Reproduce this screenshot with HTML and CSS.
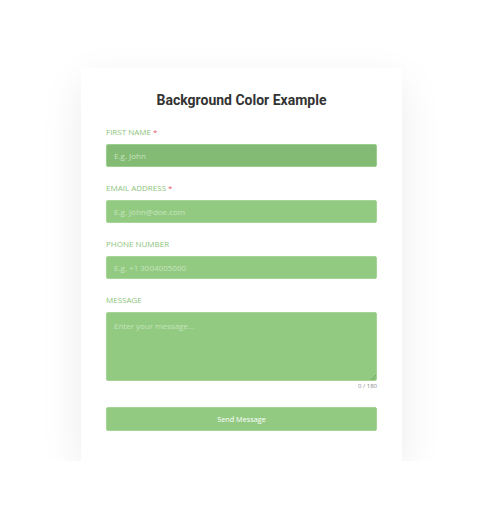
FILE: index.html
```
<!DOCTYPE html>
<html>
<head>
<meta charset="utf-8">
<link rel="stylesheet" href="styles.css">
</head>
<body>
<div class="card">
  <h1 class="title">Background Color Example</h1>
  <div class="field">
    <label class="label">First Name <span class="req">*</span></label>
    <input class="input input-active" type="text" placeholder="E.g. John">
  </div>
  <div class="field">
    <label class="label">Email Address <span class="req">*</span></label>
    <input class="input" type="text" placeholder="E.g. john@doe.com">
  </div>
  <div class="field">
    <label class="label">Phone Number</label>
    <input class="input" type="text" placeholder="E.g. +1 3004005000">
  </div>
  <div class="field field-msg">
    <label class="label">Message</label>
    <div class="ta-wrap">
      <textarea class="input textarea" placeholder="Enter your message..."></textarea>
      <svg class="grip" width="6" height="6" viewBox="0 0 6 6"><path d="M6 1 L1 6 M6 3.5 L3.5 6" stroke="#6e9e62" stroke-width="0.8" fill="none"/></svg>
    </div>
    <div class="counter">0 / 180</div>
  </div>
  <button class="btn">Send Message</button>
</div>
</body>
</html>
```
FILE: styles.css
```
html, body {
  margin: 0;
  padding: 0;
  background: #ffffff;
}
body {
  padding-top: 68px;
  font-family: "Open Sans", "Liberation Sans", sans-serif;
}
.card {
  width: 321px;
  margin-left: 81px;
  box-sizing: border-box;
  padding: 22px 25px 30px 25px;
  background: #ffffff;
  box-shadow: 0 14px 40px rgba(0, 0, 0, 0.08);
}
.title {
  margin: 0 0 16px 0;
  font-family: Roboto, "Liberation Sans", sans-serif;
  font-weight: 700;
  font-size: 14px;
  line-height: 20px;
  color: #333333;
  text-align: center;
}
.field {
  display: flex;
  flex-direction: column;
  margin-bottom: 15px;
}
.label {
  font-size: 8px;
  line-height: 12px;
  text-transform: uppercase;
  color: #8cc57c;
  margin-bottom: 6px;
}
.req {
  color: #e0606a;
}
.input {
  box-sizing: border-box;
  width: 100%;
  height: 23px;
  margin: 0;
  padding: 0 7px;
  border: 1px solid #a4d496;
  border-radius: 2px;
  background: #92ca82;
  font-family: "Open Sans", "Liberation Sans", sans-serif;
  font-size: 8px;
  color: #ffffff;
  outline: none;
}
.input::placeholder {
  color: #c6e4bc;
}
.input-active {
  background: #84bb74;
  border-color: #9ccf8e;
}
.ta-wrap {
  position: relative;
}
.textarea {
  height: 69px;
  padding-top: 7px;
  resize: none;
  display: block;
}
.grip {
  position: absolute;
  right: 1px;
  bottom: 1px;
}
.field-msg {
  margin-bottom: 15px;
}
.counter {
  text-align: right;
  font-size: 6px;
  line-height: 11px;
  color: #888888;
}
.btn {
  display: block;
  width: 100%;
  height: 24px;
  margin: 0;
  padding: 0;
  border: 1px solid #a4d496;
  border-radius: 2px;
  background: #92ca82;
  color: #ffffff;
  font-family: "Open Sans", "Liberation Sans", sans-serif;
  font-size: 7.3px;
}
```
